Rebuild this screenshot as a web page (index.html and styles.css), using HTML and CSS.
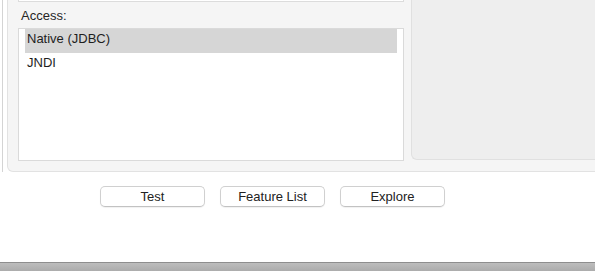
FILE: index.html
```html
<!DOCTYPE html>
<html>
<head>
<meta charset="utf-8">
<link rel="stylesheet" href="styles.css">
</head>
<body>
<div class="window">
  <div class="main">
    <div class="frame">
      <div class="panel">
        <div class="left-col">
          <div class="top-box"><div class="top-text">Database Connection</div></div>
          <div class="label">Access:</div>
          <div class="list">
            <div class="row selected">Native (JDBC)</div>
            <div class="row">JNDI</div>
          </div>
        </div>
        <div class="right-pane"></div>
      </div>
    </div>
    <div class="buttons">
      <button class="btn">Test</button>
      <button class="btn">Feature List</button>
      <button class="btn">Explore</button>
    </div>
  </div>
  <div class="bottom-bar"></div>
</div>
</body>
</html>
```
FILE: styles.css
```css
html, body {
  margin: 0;
  padding: 0;
  background: #ffffff;
}
body {
  width: 595px;
  height: 271px;
  overflow: hidden;
  font-family: "Liberation Sans", Arial, sans-serif;
  font-size: 13px;
  color: #222222;
}
.window {
  display: flex;
  flex-direction: column;
  height: 271px;
}
.main {
  height: 262px;
  display: flex;
  flex-direction: column;
}
.frame {
  margin-left: 2px;
  border-left: 1px solid #d4d4d4;
  padding-left: 4px;
  height: 172px;
  box-sizing: border-box;
}
.panel {
  width: 600px;
  height: 172px;
  box-sizing: border-box;
  background: #f5f5f5;
  border: 1px solid #e2e2e2;
  border-top: none;
  border-bottom-left-radius: 6px;
  padding: 0 0 10px 10px;
  display: flex;
  gap: 7px;
  align-items: flex-start;
}
.left-col {
  width: 386px;
  display: flex;
  flex-direction: column;
}
.top-box {
  height: 2px;
  box-sizing: border-box;
  background: #ffffff;
  border: 1px solid #dcdcdc;
  border-top: none;
  overflow: hidden;
}
.top-text {
  margin-top: -12px;
  margin-left: 8px;
  line-height: 16px;
  color: #444444;
}
.label {
  height: 26px;
  line-height: 26px;
  padding-left: 3px;
  padding-top: 1px;
  box-sizing: border-box;
  color: #262626;
}
.list {
  height: 133px;
  box-sizing: border-box;
  background: #ffffff;
  border: 1px solid #dadada;
  padding: 0 6px;
}
.row {
  height: 24px;
  line-height: 20px;
  padding: 0 0 4px 2px;
  box-sizing: border-box;
  color: #1e1e1e;
}
.row.selected {
  background: #d6d6d6;
}
.right-pane {
  flex: 1;
  height: 160px;
  box-sizing: border-box;
  background: #eeeeee;
  border: 1px solid #e0e0e0;
  border-top: none;
  border-right: none;
  border-bottom-left-radius: 6px;
}
.buttons {
  display: flex;
  gap: 15px;
  padding-left: 100px;
  margin-top: 14px;
}
.btn {
  width: 105px;
  height: 21px;
  box-sizing: border-box;
  background: #ffffff;
  border: 1px solid #d0d0d0;
  border-bottom-color: #c2c2c2;
  border-radius: 5px;
  box-shadow: 0 1px 1px rgba(0, 0, 0, 0.06);
  font-family: "Liberation Sans", Arial, sans-serif;
  font-size: 13px;
  color: #222222;
  padding: 0;
  line-height: 19px;
  text-align: center;
}
.bottom-bar {
  height: 9px;
  box-sizing: border-box;
  border-top: 1px solid #8e8e8e;
  background: linear-gradient(#bdbdbd, #acacac);
}
```
